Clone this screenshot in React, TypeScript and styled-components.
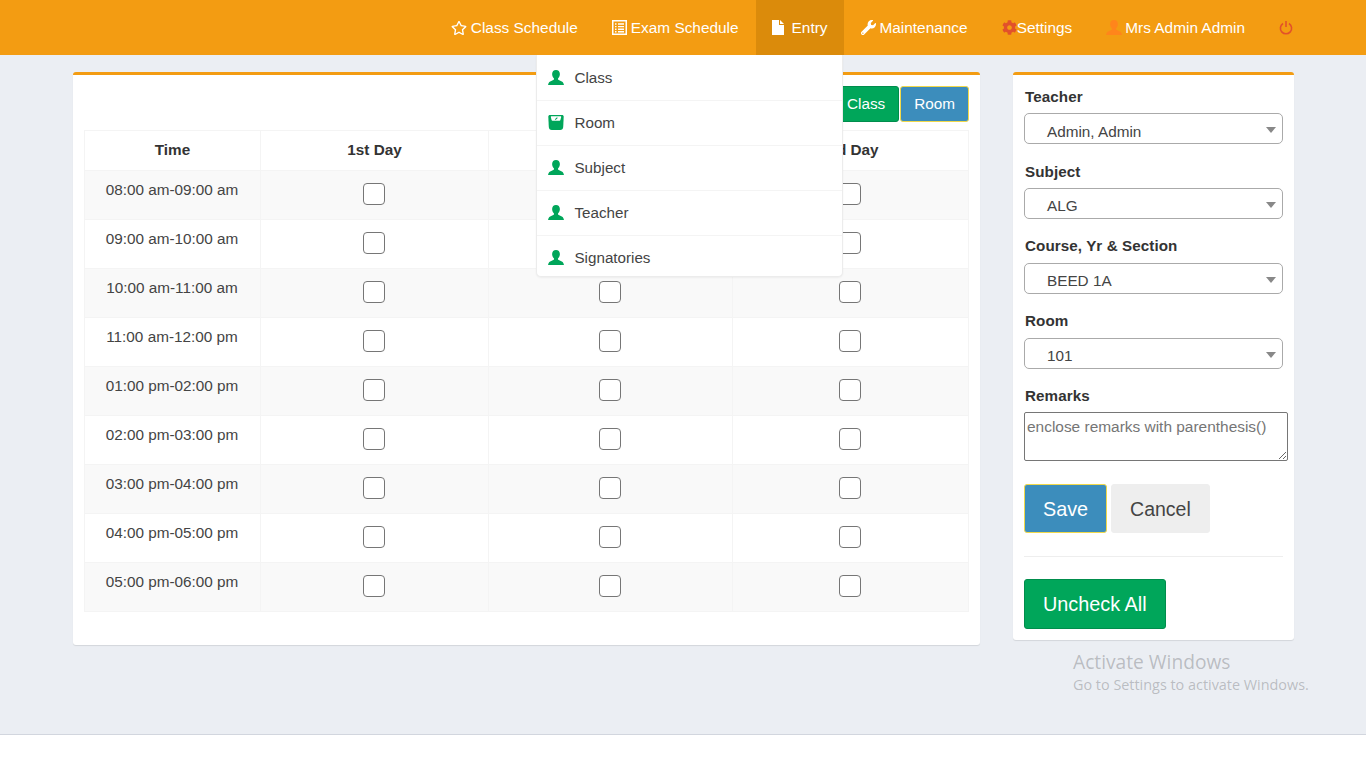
import React from "react";
import styled, { createGlobalStyle } from "styled-components";
import { FaRegStar, FaWrench, FaCog } from "react-icons/fa";

const Global = createGlobalStyle`
  html, body { margin: 0; padding: 0; background: #fff; }
  body { font-family: "Liberation Sans", Arial, sans-serif; font-size: 15.2px; color: #333; }
  * { box-sizing: border-box; }
`;

const Page = styled.div`
  position: relative;
  width: 1366px;
  height: 768px;
  overflow: hidden;
  display: flex;
  flex-direction: column;
`;

const Nav = styled.header`
  height: 55px;
  flex: none;
  background: #f39c12;
  display: flex;
  justify-content: flex-end;
  padding-right: 56px;
`;

const NavItem = styled.div<{ $active?: boolean; $gap?: number }>`
  position: relative;
  height: 55px;
  display: flex;
  align-items: center;
  gap: ${(p) => p.$gap ?? 4}px;
  padding: 0 17px 0 ${(p) => (p.$active ? 16 : 17)}px;
  color: #fff;
  font-size: 15.4px;
  white-space: nowrap;
  background: ${(p) => (p.$active ? "#db8b0b" : "transparent")};
`;

const Menu = styled.div`
  position: absolute;
  top: 55px;
  right: 1px;
  width: 307px;
  padding-top: 1px;
  background: #fff;
  border: 1px solid #ececec;
  border-top: 0;
  border-radius: 0 0 5px 5px;
  z-index: 5;
  box-shadow: 0 1px 2px rgba(0, 0, 0, 0.05);
`;

const MenuItem = styled.div`
  height: 45px;
  display: flex;
  align-items: center;
  gap: 10px;
  padding: 0 0 1px 11px;
  color: #444;
  font-size: 15.2px;
  border-bottom: 1px solid #f4f4f4;
  &:last-child {
    height: 40px;
    padding: 3px 0 0 11px;
    border-bottom: 0;
  }
`;

const Main = styled.main`
  flex: none;
  height: 679px;
  background: #ebeef3;
  display: flex;
  align-items: flex-start;
  gap: 33px;
  padding: 17px 0 0 73px;
`;

const Card = styled.section<{ $w: number; $h: number }>`
  width: ${(p) => p.$w}px;
  height: ${(p) => p.$h}px;
  flex: none;
  background: #fff;
  border-top: 3px solid #f39c12;
  border-radius: 3px;
  box-shadow: 0 1px 1px rgba(0, 0, 0, 0.1);
`;

const ScheduleCard = styled(Card)`
  padding: 11px 11px 0;
`;

const Toolbar = styled.div`
  height: 44px;
  display: flex;
  justify-content: flex-end;
  align-items: flex-start;
`;

const SmallButton = styled.div<{ $tone: "green" | "blue" }>`
  height: 36px;
  display: flex;
  align-items: center;
  padding: 0 13px;
  color: #fff;
  font-size: 15.3px;
  border-radius: 3px;
  background: ${(p) => (p.$tone === "green" ? "#00a65a" : "#3c8dbc")};
  border: 1px solid ${(p) => (p.$tone === "green" ? "#008d4c" : "#f0d84a")};
  margin-left: ${(p) => (p.$tone === "blue" ? 1 : 0)}px;
`;

const Table = styled.table`
  width: 884px;
  border-collapse: collapse;
  table-layout: fixed;
  font-size: 15.3px;
`;

const Th = styled.th<{ $w: number }>`
  width: ${(p) => p.$w}px;
  height: 40px;
  border: 1px solid #f4f4f4;
  font-weight: 700;
  text-align: center;
  padding: 0 0 2px;
  color: #333;
`;

const Row = styled.tr`
  height: 49px;
  &:nth-child(odd) { background: #f9f9f9; }
`;

const TimeCell = styled.td`
  border: 1px solid #f4f4f4;
  text-align: center;
  vertical-align: top;
  padding: 10px 1px 0 0;
  color: #444;
  line-height: 18px;
`;

const BoxCell = styled.td`
  border: 1px solid #f4f4f4;
  vertical-align: top;
  padding: 12px 2px 0 0;
`;

const Check = styled.input.attrs({ type: "checkbox" })`
  appearance: none;
  display: block;
  width: 22px;
  height: 22px;
  margin: 0 auto;
  background: #fff;
  border: 1px solid #767676;
  border-radius: 4px;
`;

const SideCard = styled(Card)`
  padding: 13px 0 0 11px;
`;

const Label = styled.div<{ $lift?: boolean; $after: number }>`
  font-weight: 700;
  font-size: 15.2px;
  letter-spacing: 0.08px;
  line-height: 17px;
  color: #333;
  margin: ${(p) => (p.$lift ? -1 : 0)}px 0 ${(p) => p.$after}px 1px;
`;

const Select = styled.div<{ $top: number }>`
  position: relative;
  width: 259px;
  height: 31px;
  border: 1px solid #aaa;
  border-radius: 5px;
  padding: ${(p) => p.$top}px 0 0 22px;
  line-height: 17px;
  font-size: 15.3px;
  color: #444;
  margin-bottom: 19px;
  &::after {
    content: "";
    position: absolute;
    right: 6px;
    top: 13px;
    border-left: 5px solid transparent;
    border-right: 5px solid transparent;
    border-top: 6px solid #888;
  }
`;

const Remarks = styled.textarea`
  display: block;
  width: 264px;
  height: 49px;
  margin: 0 0 23px;
  padding: 5px 2px;
  border: 1px solid #767676;
  border-radius: 2px;
  font-family: "Liberation Sans", Arial, sans-serif;
  font-size: 15.45px;
  line-height: 17px;
  color: #444;
  &::placeholder { color: #757575; opacity: 1; }
`;

const Actions = styled.div`
  display: flex;
  gap: 4px;
`;

const BigButton = styled.div<{ $tone: "blue" | "grey" | "green" }>`
  height: ${(p) => (p.$tone === "green" ? 50 : 49)}px;
  display: inline-flex;
  align-items: center;
  padding: ${(p) => (p.$tone === "green" ? 0 : 1)}px 18px 0;
  font-size: ${(p) => ({ blue: 19.8, grey: 19.5, green: 19.85 }[p.$tone])}px;
  border-radius: 3px;
  color: ${(p) => (p.$tone === "grey" ? "#444" : "#fff")};
  background: ${(p) => ({ blue: "#3c8dbc", grey: "#eee", green: "#00a65a" }[p.$tone])};
  border: 1px solid ${(p) => ({ blue: "#f0d84a", grey: "#eee", green: "#008d4c" }[p.$tone])};
`;

const Divider = styled.hr`
  width: 259px;
  height: 1px;
  border: 0;
  background: #eee;
  margin: 23px 0 22px;
`;

const Watermark = styled.div`
  position: absolute;
  left: 1073px;
  top: 650px;
  font-family: "Open Sans", sans-serif;
  color: rgba(125, 127, 132, 0.45);
  z-index: 10;
  white-space: nowrap;
`;

const WatermarkTitle = styled.div`
  font-size: 19.2px;
  line-height: 24px;
`;

const WatermarkText = styled.div`
  font-size: 14.4px;
  line-height: 20px;
  margin-top: 1px;
`;

const Footer = styled.footer`
  flex: 1;
  background: #fff;
  border-top: 1px solid #d2d6de;
`;

const Svg = styled.svg`
  display: block;
  flex: none;
`;

const UserIcon = ({ color }: { color: string }) => (
  <Svg width={16} height={15} viewBox="1 0.5 14 14.5" preserveAspectRatio="none">
    <path
      fill={color}
      d="M8 0.5c2.1 0 3.4 1.6 3.4 3.9 0 1.7-.7 3.2-1.5 4.1-.3.4-.3 1 .1 1.4.4.4 1.1.7 2.2 1.2 1.2.5 2.3 1.1 2.8 3.9H1c.5-2.8 1.6-3.4 2.8-3.9 1.1-.5 1.8-.8 2.2-1.2.4-.4.4-1 .1-1.4C5.3 7.6 4.6 6.1 4.6 4.4 4.6 2.1 5.9.5 8 .5z"
    />
  </Svg>
);

const FileIcon = () => (
  <Svg width={12} height={15} viewBox="0 0 12 15">
    <path fill="#fff" d="M0 0h7v5h5v10H0z" />
    <path fill="#fff" d="M8 0l4 4H8z" />
  </Svg>
);

const ListIcon = () => (
  <Svg width={15} height={15} viewBox="0 0 15 15">
    <rect x="0.75" y="0.75" width="13.5" height="13.5" fill="none" stroke="#fff" strokeWidth="1.5" />
    <path
      stroke="#fff"
      strokeWidth="1.4"
      d="M3 4h1.5M6 4h6M3 6.6h1.5M6 6.6h6M3 9.2h1.5M6 9.2h6M3 11.8h1.5M6 11.8h6"
    />
  </Svg>
);

const ScaleIcon = () => (
  <Svg width={16} height={15} viewBox="0 0 16 15">
    <path
      fill="#00a65a"
      d="M2 0h12c1 0 1.7.7 1.7 1.7l-.5 10.3c-.1 1.8-1.2 3-3 3H3.8c-1.8 0-2.9-1.2-3-3L.3 1.7C.3.7 1 0 2 0z"
    />
    <path d="M3.6 1.2h8.8c.6 0 .9.4.8.9l-.8 3c-.1.4-.4.6-.8.6H4.4c-.4 0-.7-.2-.8-.6l-.8-3c-.1-.5.2-.9.8-.9z" fill="#fff" />
    <path d="M7.2 4.6L9.4 2.6" stroke="#00a65a" strokeWidth="1.1" />
  </Svg>
);

const PowerIcon = () => (
  <Svg width={14} height={15} viewBox="0 0 15 15" fill="none" stroke="#e2512a" strokeWidth="1.7">
    <path d="M4.3 3.2a6 6 0 1 0 6.4 0" />
    <path d="M7.5 0.5v6.5" />
  </Svg>
);

const times = [
  "08:00 am-09:00 am",
  "09:00 am-10:00 am",
  "10:00 am-11:00 am",
  "11:00 am-12:00 pm",
  "01:00 pm-02:00 pm",
  "02:00 pm-03:00 pm",
  "03:00 pm-04:00 pm",
  "04:00 pm-05:00 pm",
  "05:00 pm-06:00 pm",
];

const fields = [
  { label: "Teacher", value: "Admin, Admin", top: 9, lift: false },
  { label: "Subject", value: "ALG", top: 8, lift: false },
  { label: "Course, Yr & Section", value: "BEED 1A", top: 8, lift: true },
  { label: "Room", value: "101", top: 8, lift: true },
];

const menu = ["Class", "Room", "Subject", "Teacher", "Signatories"];

export default function App() {
  return (
    <Page>
      <Global />
      <Nav>
        <NavItem><FaRegStar size={16} color="#fff" />Class Schedule</NavItem>
        <NavItem><ListIcon />Exam Schedule</NavItem>
        <NavItem $active $gap={8}>
          <FileIcon />Entry
          <Menu>
            {menu.map((m) => (
              <MenuItem key={m}>
                {m === "Room" ? <ScaleIcon /> : <UserIcon color="#00a65a" />}
                {m}
              </MenuItem>
            ))}
          </Menu>
        </NavItem>
        <NavItem $gap={3}><FaWrench size={15} color="#fff" />Maintenance</NavItem>
        <NavItem $gap={0}><FaCog size={15} color="#e2512a" />Settings</NavItem>
        <NavItem $gap={3}><UserIcon color="#ff851b" />Mrs Admin Admin</NavItem>
        <NavItem><PowerIcon /></NavItem>
      </Nav>
      <Main>
        <ScheduleCard $w={907} $h={573}>
          <Toolbar>
            <SmallButton $tone="green">Class</SmallButton>
            <SmallButton $tone="blue">Room</SmallButton>
          </Toolbar>
          <Table>
            <thead>
              <tr>
                <Th $w={176}>Time</Th>
                <Th $w={228}>1st Day</Th>
                <Th $w={244}>2nd Day</Th>
                <Th $w={236}>3rd Day</Th>
              </tr>
            </thead>
            <tbody>
              {times.map((t) => (
                <Row key={t}>
                  <TimeCell>{t}</TimeCell>
                  <BoxCell><Check /></BoxCell>
                  <BoxCell><Check /></BoxCell>
                  <BoxCell><Check /></BoxCell>
                </Row>
              ))}
            </tbody>
          </Table>
        </ScheduleCard>
        <SideCard $w={281} $h={568}>
          {fields.map((f) => (
            <React.Fragment key={f.label}>
              <Label $lift={f.lift} $after={f.lift ? 9 : 8}>{f.label}</Label>
              <Select $top={f.top}>{f.value}</Select>
            </React.Fragment>
          ))}
          <Label $lift $after={8}>Remarks</Label>
          <Remarks placeholder="enclose remarks with parenthesis()" />
          <Actions>
            <BigButton $tone="blue">Save</BigButton>
            <BigButton $tone="grey">Cancel</BigButton>
          </Actions>
          <Divider />
          <BigButton $tone="green">Uncheck All</BigButton>
        </SideCard>
      </Main>
      <Footer />
      <Watermark>
        <WatermarkTitle>Activate Windows</WatermarkTitle>
        <WatermarkText>Go to Settings to activate Windows.</WatermarkText>
      </Watermark>
    </Page>
  );
}
